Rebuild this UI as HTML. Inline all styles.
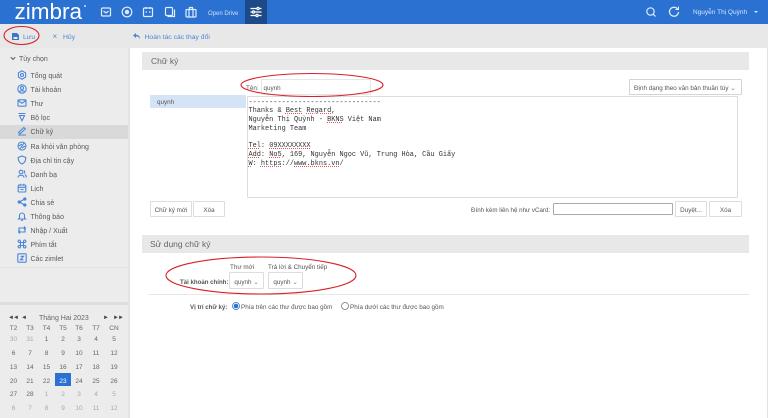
<!DOCTYPE html>
<html lang="vi"><head><meta charset="utf-8"><title>Zimbra</title>
<style>
html,body{margin:0;padding:0;width:768px;height:418px;overflow:hidden;background:#fff;font-family:"Liberation Sans",sans-serif;color:#555}
.a{position:absolute;white-space:nowrap;line-height:10px}
.b{position:absolute;box-sizing:border-box;background:#fff;border:1px solid #ddd;border-radius:1px;font-size:6.3px;color:#555;text-align:center;white-space:nowrap}
.n{position:absolute;left:30.500px;margin-top:2px;font-size:7px;line-height:10px;color:#5a5a5a;white-space:nowrap}
.i{position:absolute;left:17px;width:10px;height:10px;fill:none;stroke:#4a86d8;stroke-width:1.1}
.h{position:absolute;top:6px;width:12px;height:12px;fill:none;stroke:#e3edfb;stroke-width:1.2}
.c{position:absolute;margin-top:2px;width:18px;text-align:center;font-size:6.5px;line-height:10px;color:#666}
.g{color:#aaa}
.w{text-decoration:underline dotted #e2555b;text-decoration-thickness:1px;text-underline-offset:1px}
</style></head><body>
<div class="a" style="left:0;top:0;width:768px;height:24px;background:#2a71d2"></div>
<div class="a" style="left:245px;top:0;width:22px;height:24px;background:#1c4a86"></div>
<div class="a" style="left:14.500px;top:0;font-size:22.500px;line-height:24px;color:#fff">zimbra</div>
<div class="a" style="left:84px;top:5px;width:2px;height:2px;border-radius:50%;background:#cfe0f7"></div>
<svg class="h" style="left:99.500px" viewBox="0 0 12 12"><rect x="1.500" y="2" width="9" height="8" rx="1"/><path d="M3.500 5l2.500 2 2.500-2"/></svg>
<svg class="h" style="left:121px" viewBox="0 0 12 12"><circle cx="6" cy="6" r="4.800"/><circle cx="6" cy="6" r="1.600" fill="#dbe7f8"/></svg>
<svg class="h" style="left:142px" viewBox="0 0 12 12"><rect x="1.500" y="2" width="9" height="8.500" rx="1"/><path d="M3.500 6h1.500M7 6h1.500M4 1v2M8 1v2"/></svg>
<svg class="h" style="left:163.500px" viewBox="0 0 12 12"><rect x="1.500" y="1.500" width="7" height="8" rx="1"/><path d="M10.500 3.500v7h-7"/></svg>
<svg class="h" style="left:185px" viewBox="0 0 12 12"><rect x="1" y="3.500" width="10" height="7.500" rx="1"/><path d="M4.500 3.500V1.500h3v2M4 3.500V11M8 3.500V11"/></svg>
<div class="a" style="left:208px;top:9px;font-size:6px;color:#cfe0f7">Open Drive</div>
<svg class="h" style="left:250px" viewBox="0 0 12 12"><path d="M.5 2.500h11M.5 6h11M.5 9.500h11" stroke="#fff"/><circle cx="8" cy="2.500" r="1.100" fill="#1c4a86" stroke="#fff"/><circle cx="3.500" cy="6" r="1.100" fill="#1c4a86" stroke="#fff"/><circle cx="7" cy="9.500" r="1.100" fill="#1c4a86" stroke="#fff"/></svg>
<svg class="h" style="left:645px" viewBox="0 0 12 12"><circle cx="5.500" cy="5.500" r="3.700"/><path d="M8.200 8.200l2.300 2.300"/></svg>
<svg class="h" style="left:668px" viewBox="0 0 12 12"><path d="M9.800 3.300A4.500 4.500 0 1 0 10.500 6" stroke-width="1.300"/><path d="M7.500 3.500h3v-3" stroke-width="1"/></svg>
<div class="a" style="left:693px;top:7.500px;font-size:6.500px;color:#d9e6f8">Nguyễn Thị Quỳnh</div>
<div class="a" style="left:754px;top:11px;width:0;height:0;border:2px solid transparent;border-top:2px solid #d9e6f8;border-bottom:0"></div>

<div class="a" style="left:0;top:24px;width:768px;height:24px;background:#e8e8e8"></div>
<svg class="a" style="left:12px;top:33px" width="7" height="7" viewBox="0 0 7 7"><path d="M0 0h5l2 2v5H0z" fill="#3a76cc"/><rect x="1.500" y="4" width="4" height="2" fill="#e8e8e8"/></svg>
<div class="a" style="left:23px;top:33px;font-size:6.800px;color:#4a86d8">Lưu</div>
<div class="a" style="left:52.500px;top:32px;font-size:8px;color:#4a86d8">×</div>
<div class="a" style="left:63px;top:33px;font-size:6.800px;color:#4a86d8">Hủy</div>
<svg class="a" style="left:133px;top:33px" width="8" height="7" viewBox="0 0 8 7"><path d="M3 0L0 2.500 3 5V3.400c2 0 3 .7 4 2.600 0-2.800-1.500-4.200-4-4.200z" fill="#4a86d8"/></svg>
<div class="a" style="left:144.500px;top:33px;font-size:6.800px;color:#4a86d8">Hoàn tác các thay đổi</div>

<div class="a" style="left:0;top:48px;width:128px;height:370px;background:#ececec"></div>
<div class="a" style="left:0;top:124.500px;width:128px;height:14px;background:#d9d9d9"></div>
<div class="a" style="left:0;top:267px;width:128px;height:1px;background:#e2e2e2"></div>
<div class="a" style="left:0;top:302px;width:128px;height:3px;background:#dedede"></div>
<svg class="a" style="left:10px;top:56px" width="6" height="5" viewBox="0 0 6 5"><path d="M.8 1.200L3 3.400l2.200-2.200" fill="none" stroke="#555"/></svg>
<div class="n" style="left:19px;top:53px">Tùy chọn</div>
<svg class="i" style="top:70px" viewBox="0 0 10 10"><path d="M5 .8l3.600 2.100v4.200L5 9.200 1.400 7.100V2.900z"/><circle cx="5" cy="5" r="1.500"/></svg><div class="n" style="top:70px">Tổng quát</div>
<svg class="i" style="top:84px" viewBox="0 0 10 10"><circle cx="5" cy="5" r="4.200"/><circle cx="5" cy="4" r="1.500"/><path d="M2.500 7.800c1-1.500 4-1.500 5 0"/></svg><div class="n" style="top:84px">Tài khoản</div>
<svg class="i" style="top:98px" viewBox="0 0 10 10"><rect x="1" y="1.800" width="8" height="6.400" rx=".6"/><path d="M1.200 2.500L5 5.300l3.800-2.800"/></svg><div class="n" style="top:98px">Thư</div>
<svg class="i" style="top:112px" viewBox="0 0 10 10"><path d="M1.500 1.500h7M2.500 3.500h5L5 8.800z"/></svg><div class="n" style="top:112px">Bộ lọc</div>
<svg class="i" style="top:126px" viewBox="0 0 10 10"><path d="M1.500 6.500L6.800 1.500l1.500 1.400-5.300 5zM1 9h8"/></svg><div class="n" style="top:126px">Chữ ký</div>
<svg class="i" style="top:141px" viewBox="0 0 10 10"><circle cx="5" cy="5" r="4"/><path d="M3 8l4-6M2 5l3-2M5 7l3-2"/></svg><div class="n" style="top:141px">Ra khỏi văn phòng</div>
<svg class="i" style="top:155px" viewBox="0 0 10 10"><path d="M5 1l3.800 1.500c0 3-1 5.300-3.800 6.500C2.200 7.800 1.200 5.500 1.200 2.500z"/></svg><div class="n" style="top:155px">Địa chỉ tin cậy</div>
<svg class="i" style="top:169px" viewBox="0 0 10 10"><circle cx="4" cy="3" r="1.800"/><path d="M1 8.500c.3-3 5.700-3 6 0M6.800 1.500a1.700 1.700 0 0 1 0 3M8 5.500c1 .5 1.300 1.500 1.300 3"/></svg><div class="n" style="top:169px">Danh bạ</div>
<svg class="i" style="top:183px" viewBox="0 0 10 10"><rect x="1.200" y="2" width="7.600" height="7" rx="1"/><path d="M1.200 4.300h7.600M3.200 .8v2M6.800 .8v2M3.500 6.500h3"/></svg><div class="n" style="top:183px">Lịch</div>
<svg class="i" style="top:197px" viewBox="0 0 10 10"><path d="M7.500 2L2.500 5l5 3"/><circle cx="7.800" cy="2" r="1.100" fill="#4a86d8"/><circle cx="2.300" cy="5" r="1.100" fill="#4a86d8"/><circle cx="7.800" cy="8" r="1.100" fill="#4a86d8"/></svg><div class="n" style="top:197px">Chia sẻ</div>
<svg class="i" style="top:211px" viewBox="0 0 10 10"><path d="M2.500 7V4.500a2.500 2.500 0 0 1 5 0V7l1 1h-7zM4 9.300h2"/></svg><div class="n" style="top:211px">Thông báo</div>
<svg class="i" style="top:225px" viewBox="0 0 10 10"><path d="M2 6V3h6.500M7 1.500L8.500 3 7 4.500M8 4v3H1.500M3 5.500L1.500 7 3 8.500"/></svg><div class="n" style="top:225px">Nhập / Xuất</div>
<svg class="i" style="top:239px" viewBox="0 0 10 10" stroke-width="1.300"><path d="M3.500 3.500h3v3h-3zM3.500 3.500H2.300a1.200 1.200 0 1 1 1.200-1.200zM6.500 3.500V2.300a1.200 1.200 0 1 1 1.200 1.200zM3.500 6.500v1.200a1.200 1.200 0 1 1-1.200-1.200zM6.500 6.500h1.200a1.200 1.200 0 1 1-1.200 1.200z"/></svg><div class="n" style="top:239px">Phím tắt</div>
<svg class="i" style="top:253px" viewBox="0 0 10 10"><rect x=".8" y=".8" width="8.400" height="8.400" rx=".8"/><path d="M3.500 3.300h3L3.500 6.700h3"/></svg><div class="n" style="top:253px">Các zimlet</div>

<div class="a" style="left:8px;top:313px;font-size:6px;color:#444;letter-spacing:-1px">◄◄</div>
<div class="a" style="left:21px;top:313px;font-size:6px;color:#444">◄</div>
<div class="a" style="left:39px;top:313.500px;font-size:7px;color:#666">Tháng Hai 2023</div>
<div class="a" style="left:103px;top:313px;font-size:6px;color:#444">►</div>
<div class="a" style="left:113px;top:313px;font-size:6px;color:#444;letter-spacing:-1px">►►</div>
<div class="a" style="left:55px;top:373px;width:16px;height:13px;background:#2a71d2"></div>
<div id="cal"><div class="c" style="left:4.500px;top:322px">T2</div><div class="c" style="left:21px;top:322px">T3</div><div class="c" style="left:37.500px;top:322px">T4</div><div class="c" style="left:54px;top:322px">T5</div><div class="c" style="left:70px;top:322px">T6</div><div class="c" style="left:87px;top:322px">T7</div><div class="c" style="left:105px;top:322px">CN</div>
<div class="c g" style="left:4.500px;top:333px">30</div><div class="c g" style="left:21px;top:333px">31</div><div class="c" style="left:37.500px;top:333px">1</div><div class="c" style="left:54px;top:333px">2</div><div class="c" style="left:70px;top:333px">3</div><div class="c" style="left:87px;top:333px">4</div><div class="c" style="left:105px;top:333px">5</div>
<div class="c" style="left:4.500px;top:347px">6</div><div class="c" style="left:21px;top:347px">7</div><div class="c" style="left:37.500px;top:347px">8</div><div class="c" style="left:54px;top:347px">9</div><div class="c" style="left:70px;top:347px">10</div><div class="c" style="left:87px;top:347px">11</div><div class="c" style="left:105px;top:347px">12</div>
<div class="c" style="left:4.500px;top:361px">13</div><div class="c" style="left:21px;top:361px">14</div><div class="c" style="left:37.500px;top:361px">15</div><div class="c" style="left:54px;top:361px">16</div><div class="c" style="left:70px;top:361px">17</div><div class="c" style="left:87px;top:361px">18</div><div class="c" style="left:105px;top:361px">19</div>
<div class="c" style="left:4.500px;top:375px">20</div><div class="c" style="left:21px;top:375px">21</div><div class="c" style="left:37.500px;top:375px">22</div><div class="c" style="left:54px;top:375px;color:#fff">23</div><div class="c" style="left:70px;top:375px">24</div><div class="c" style="left:87px;top:375px">25</div><div class="c" style="left:105px;top:375px">26</div>
<div class="c" style="left:4.500px;top:388px">27</div><div class="c" style="left:21px;top:388px">28</div><div class="c g" style="left:37.500px;top:388px">1</div><div class="c g" style="left:54px;top:388px">2</div><div class="c g" style="left:70px;top:388px">3</div><div class="c g" style="left:87px;top:388px">4</div><div class="c g" style="left:105px;top:388px">5</div>
<div class="c g" style="left:4.500px;top:402px">6</div><div class="c g" style="left:21px;top:402px">7</div><div class="c g" style="left:37.500px;top:402px">8</div><div class="c g" style="left:54px;top:402px">9</div><div class="c g" style="left:70px;top:402px">10</div><div class="c g" style="left:87px;top:402px">11</div><div class="c g" style="left:105px;top:402px">12</div></div>

<div class="a" style="left:128px;top:48px;width:2px;height:370px;background:#e4e4e4"></div>
<div class="a" style="left:767px;top:48px;width:1px;height:370px;background:#e2e2e2"></div>
<div class="a" style="left:142px;top:52px;width:607px;height:18px;background:#e8e8e8"></div>
<div class="a" style="left:151px;top:56px;font-size:8.500px;color:#666">Chữ ký</div>
<div class="a" style="left:246px;top:84px;font-size:6.300px;color:#555">Tên:</div>
<div class="b" style="left:261px;top:79px;width:110px;height:16px;border-color:#e6e6e6;text-align:left;padding:5px 1.500px 0;line-height:8px">quynh</div>
<div class="b" style="left:629px;top:78.500px;width:113px;height:16px;text-align:left;padding:5px 4px 0;line-height:8px;border-color:#d4d4d4">Định dạng theo văn bản thuần túy <span style="color:#4a86d8">⌄</span></div>
<div class="a" style="left:150px;top:95px;width:96px;height:13px;background:#d5e3f6"></div>
<div class="a" style="left:157px;top:98px;font-size:6.300px;color:#555">quynh</div>
<div class="b" style="left:247px;top:96px;width:491px;height:102px;border-color:#ddd"></div>
<pre class="a" style="left:248.500px;top:98.700px;margin:0;white-space:pre;font:6.900px/8.700px 'Liberation Mono','DejaVu Sans Mono',monospace;color:#333">--------------------------------
Thanks &amp; <span class="w">Best</span> <span class="w">Regard</span>,
Nguyễn Thị Quỳnh - <span class="w">BKNS</span> Việt Nam
Marketing Team

<span class="w">Tel</span>: <span class="w">09XXXXXXXX</span>
<span class="w">Add</span>: <span class="w">No5</span>, 169, Nguyễn Ngọc Vũ, Trung Hòa, Cầu Giấy
<span class="w">W</span>: <span class="w">https</span>://<span class="w">www.bkns.vn</span>/</pre>
<div class="b" style="left:150px;top:201px;width:42px;height:16px;line-height:18px">Chữ ký mới</div>
<div class="b" style="left:193px;top:201px;width:32px;height:16px;line-height:18px">Xóa</div>
<div class="a" style="left:471px;top:206px;font-size:6.200px;color:#555">Đính kèm liên hệ như vCard:</div>
<div class="b" style="left:552.500px;top:203px;width:120px;height:12px;border-color:#aaa"></div>
<div class="b" style="left:675px;top:201px;width:32px;height:16px;line-height:18px">Duyệt...</div>
<div class="b" style="left:709px;top:201px;width:33px;height:16px;line-height:18px">Xóa</div>

<div class="a" style="left:142px;top:235px;width:607px;height:18px;background:#e8e8e8"></div>
<div class="a" style="left:150px;top:239px;font-size:8.500px;color:#666">Sử dụng chữ ký</div>
<div class="a" style="left:230px;top:263px;font-size:6.300px;color:#555">Thư mới</div>
<div class="a" style="left:268px;top:263px;font-size:6.300px;color:#555">Trả lời &amp; Chuyển tiếp</div>
<div class="a" style="left:180px;top:278px;font-size:6.100px;font-weight:bold;color:#555">Tài khoản chính:</div>
<div class="b" style="left:229px;top:272px;width:35px;height:17px;line-height:19px">quynh <span style="color:#4a86d8">⌄</span></div>
<div class="b" style="left:268px;top:272px;width:35px;height:17px;line-height:19px">quynh <span style="color:#4a86d8">⌄</span></div>
<div class="a" style="left:148px;top:293.500px;width:601px;height:1px;background:#e8e8e8"></div>
<div class="a" style="left:190px;top:303px;font-size:6.100px;font-weight:bold;color:#555">Vị trí chữ ký:</div>
<svg class="a" style="left:232px;top:302px" width="8" height="8" viewBox="0 0 8 8"><circle cx="4" cy="4" r="3.500" fill="#fff" stroke="#2a71d2" stroke-width=".8"/><circle cx="4" cy="4" r="2.300" fill="#2a71d2"/></svg>
<div class="a" style="left:241px;top:303px;font-size:6.300px;color:#555">Phía trên các thư được bao gồm</div>
<svg class="a" style="left:341px;top:302px" width="8" height="8" viewBox="0 0 8 8"><circle cx="4" cy="4" r="3.500" fill="#fff" stroke="#777" stroke-width=".8"/></svg>
<div class="a" style="left:350px;top:303px;font-size:6.300px;color:#555">Phía dưới các thư được bao gồm</div>

<svg class="a" style="left:0;top:0" width="768" height="418" viewBox="0 0 768 418" fill="none" stroke="#d8202a" stroke-width="1.100"><ellipse cx="21.500" cy="35.500" rx="17.500" ry="9"/><ellipse cx="312" cy="85" rx="71" ry="11.500"/><ellipse cx="261" cy="275.500" rx="95" ry="18.500"/></svg>
</body></html>
